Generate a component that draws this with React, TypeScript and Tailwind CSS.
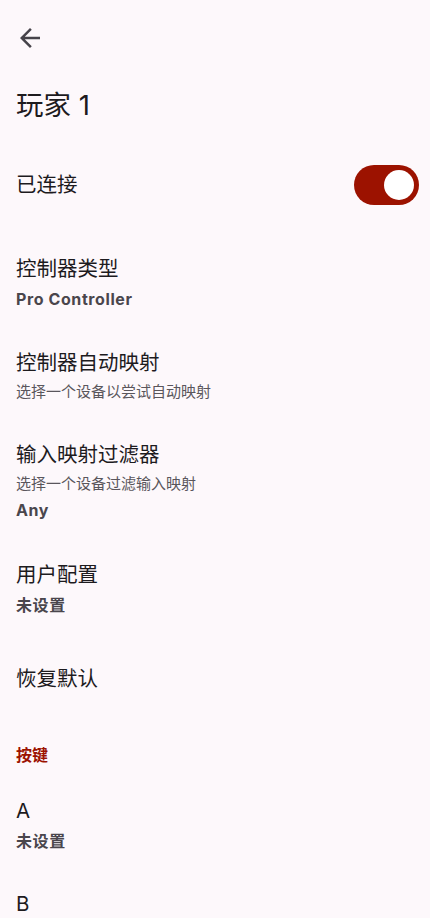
import React from "react";

const font = { fontFamily: '"Inter", "Noto Sans CJK SC", sans-serif' };

function Row({
  title,
  sub,
  value,
  className = "",
}: {
  title: string;
  sub?: string;
  value?: string;
  className?: string;
}) {
  return (
    <div className={`px-4 ${className}`}>
      <div className="text-[20.5px] leading-[30px] text-[#1d1b1e]">{title}</div>
      {sub && (
        <div className="text-[15px] leading-[28px] text-[#5a565c]">{sub}</div>
      )}
      {value && (
        <div
          className={`text-[16px] leading-[30px] font-bold tracking-[0.6px] text-[#4a464c] ${
            sub ? "-mt-[3px]" : ""
          }`}
        >
          {value}
        </div>
      )}
    </div>
  );
}

export default function App() {
  return (
    <div
      className="w-[430px] h-[918px] overflow-hidden bg-[#fdf8fb]"
      style={font}
    >
      {/* toolbar */}
      <div className="h-[76px] flex items-center pl-[15px]">
        <svg width="30" height="30" viewBox="0 0 24 24" fill="#46434a">
          <path d="M20 11H7.83l5.59-5.59L12 4l-8 8 8 8 1.41-1.41L7.83 13H20v-2z" />
        </svg>
      </div>

      <h1 className="mt-[12px] px-4 text-[27.5px] leading-[34px] text-[#1d1b1e]">
        玩家 1
      </h1>

      {/* connected switch */}
      <div className="mt-[43px] h-[40px] px-4 flex items-center justify-between">
        <span className="text-[20.5px] text-[#1d1b1e]">已连接</span>
        <div className="w-[65px] h-[40px] rounded-full bg-[#9c1200] flex items-center justify-end pr-[5px] mr-[-5px]">
          <div className="w-[30px] h-[30px] rounded-full bg-white" />
        </div>
      </div>

      <Row className="mt-[49px] pb-[17px]" title="控制器类型" value="Pro Controller" />
      <Row className="pt-[17px] pb-[17px]" title="控制器自动映射" sub="选择一个设备以尝试自动映射" />
      <Row
        className="pt-[17px] pb-[18px]"
        title="输入映射过滤器"
        sub="选择一个设备过滤输入映射"
        value="Any"
      />
      <Row className="pt-[17px]" title="用户配置" value="未设置" />
      <Row className="pt-[44px]" title="恢复默认" />

      <div className="mt-[49px] px-4 text-[16px] leading-[24px] font-bold text-[#9c1200]">
        按键
      </div>

      <Row className="mt-[29px]" title="A" value="未设置" />
      <Row className="mt-[33px]" title="B" />
    </div>
  );
}
